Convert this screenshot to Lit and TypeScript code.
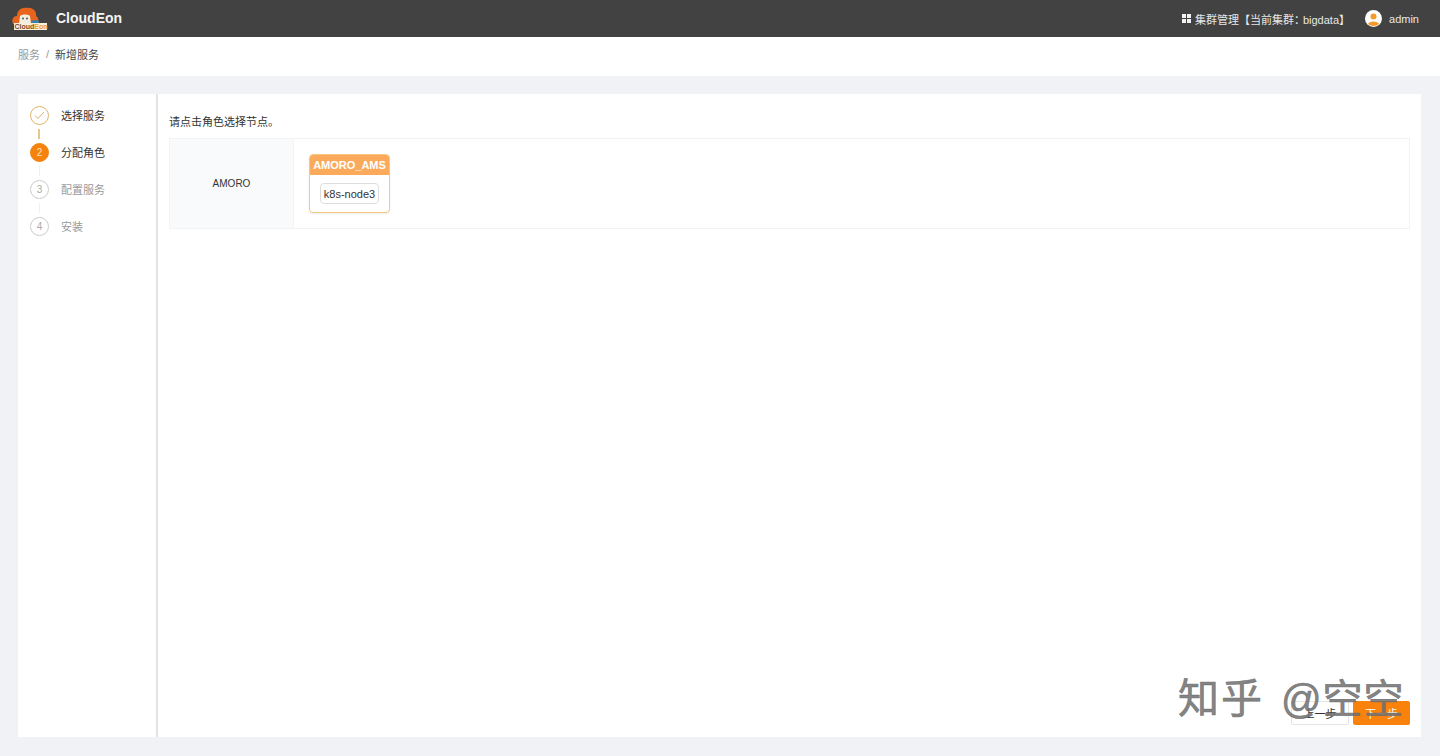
import { LitElement, html, css } from "lit";
import { customElement } from "lit/decorators.js";

@customElement("app-root")
export class AppRoot extends LitElement {
  static styles = css`
    :host { display: block; width: 1440px; height: 756px; overflow: hidden; position: relative; background: #f0f2f5;
      font-family: "Liberation Sans", "Noto Sans CJK SC", sans-serif; font-size: 11px; color: #333; }
    * { box-sizing: border-box; }
    .top { height: 37px; background: #424242; display: flex; align-items: center; padding: 0 21px 0 12px; color: #fff; }
    .logo { width: 36px; height: 24px; display: block; margin-top: 1px; }
    .brand { font-size: 14px; font-weight: 700; margin: 0 0 1px 8px; color: #f4f4f4; }
    .spacer { flex: 1; }
    .cluster { display: flex; align-items: center; gap: 4px; color: #e8e8e8; font-size: 11px; }
    .latin { margin-left: -2px; }
    .user { display: flex; align-items: center; gap: 7px; margin-left: 15px; color: #e8e8e8; }
    .crumb { height: 39px; background: #fff; display: flex; align-items: center; padding: 0 0 5px 18px; gap: 6px; }
    .crumb .muted { color: #999; }
    .crumb .cur { color: #444; }
    .main { display: flex; margin: 18px 19px 0 18px; height: 643px; }
    .steps { width: 140px; background: #fff; border-right: 2px solid #e4e4e6; padding: 11px 0 0 12px; }
    .step { display: flex; align-items: center; height: 20px; position: relative; margin-bottom: 17px; color: #999; }
    .step:last-child { margin-bottom: 0; }
    .dot { width: 19px; height: 19px; border-radius: 50%; border: 1px solid #ccc; display: flex; align-items: center; justify-content: center; font-size: 10px; color: #aaa; flex: none; margin-right: 12px; }
    .step .line { position: absolute; left: 9px; top: 24px; width: 1px; height: 10px; background: #f0f0f0; }
    .step.done .line { background: #e6c98a; width: 2px; left: 8px; }
    .step.done .dot { border-color: #dcb66c; }
    .step.done, .step.act { color: #333; }
    .step.act .dot { background: #f5820b; border-color: #f5820b; color: #ffe3c2; }
    .content { flex: 1; background: #fff; padding: 21px 11px 12px 11px; display: flex; flex-direction: column; }
    .hint { color: #333; line-height: 14px; margin-bottom: 9px; }
    .row { display: flex; height: 91px; border: 1px solid #f3f3f3; }
    .name { width: 124px; background: #f9fafb; border-right: 1px solid #f3f3f3; display: flex; align-items: center; justify-content: center; font-size: 10px; color: #333; flex: none; padding: 0 0 1px 0; }
    .cell { padding: 15px 15px; }
    .role { width: 81px; height: 59px; border: 1px solid #f5c77f; border-radius: 4px; overflow: hidden; box-shadow: 0 1px 2px rgba(0,0,0,.08); }
    .role-head { height: 20px; background: #fbaa5c; color: #fff; font-weight: 700; font-size: 11px; display: flex; align-items: center; justify-content: center; white-space: nowrap; }
    .role-body { display: flex; justify-content: center; padding-top: 8px; }
    .node { height: 21px; width: 59px; justify-content: center; border: 1px solid #ddd; border-radius: 4px; display: flex; align-items: center; font-size: 11px; color: #333; white-space: nowrap; }
    .actions { margin-top: auto; display: flex; justify-content: flex-end; gap: 4px; }
    .btn { width: 58px; height: 24px; display: flex; align-items: center; justify-content: center; border: 1px solid #e4e4e4; background: #fff; color: #333; font-size: 11px; border-radius: 2px; }
    .btn.primary { width: 57px; background: #f9820c; border-color: #f9820c; color: #fff; }
    .mark { position: absolute; left: 1178px; top: 672px; font-size: 41px; line-height: 54px; color: rgba(110, 110, 110, .85); -webkit-text-stroke: 0.7px rgba(110, 110, 110, .85); white-space: nowrap; pointer-events: none; display: flex; }
    .mark .zh { letter-spacing: 2px; margin-right: 17px; }
    .mark .at { font-size: 40px; margin-right: 1px; }
    .mark .name2 { font-size: 40px; letter-spacing: 1px; }
  `;

  render() {
    return html`
      <div class="top">
        <svg class="logo" viewBox="0 0 36 24">
          <path d="M1 17 C-1 12 2 9 5 9 C5 3 10 0 15 1 C20 0 25 4 24 9 C26 10 27 13 26 17 Z" fill="#e8641c"/>
          <path d="M8 9 C10 7 16 7 18 9 L19 17 L7 17 Z" fill="#f3ece0"/>
          <circle cx="11" cy="11.5" r="1" fill="#555"/>
          <circle cx="15" cy="11.5" r="1" fill="#555"/>
          <ellipse cx="23" cy="15" rx="4" ry="2" fill="#3d7fa8"/>
          <rect x="2" y="16" width="33" height="7" fill="#f5efdc"/>
          <text x="2.5" y="22" font-size="7" font-weight="700" font-family="Liberation Sans" fill="#7b4a2a">Cloud<tspan fill="#f09a1a">Eon</tspan></text>
        </svg>
        <span class="brand">CloudEon</span>
        <span class="spacer"></span>
        <span class="cluster">
          <svg width="9" height="9" viewBox="0 0 9 9" fill="#f2f2f2"><rect width="4" height="4"/><rect x="5" width="4" height="4"/><rect y="5" width="4" height="4"/><rect x="5" y="5" width="4" height="4"/></svg>
          <span>集群管理【当前集群：<span class="latin">bigdata</span>】</span>
        </span>
        <span class="user">
          <svg width="17" height="17" viewBox="0 0 17 17"><circle cx="8.5" cy="8.5" r="8.5" fill="#fff"/><circle cx="8.5" cy="6.5" r="3" fill="#f39a2c"/><path d="M3 14 C3.5 10.5 13.5 10.5 14 14 C11 16.5 6 16.5 3 14 Z" fill="#f39a2c"/></svg>
          admin
        </span>
      </div>
      <div class="crumb"><span class="muted">服务</span><span class="muted">/</span><span class="cur">新增服务</span></div>
      <div class="main">
        <div class="steps">
          <div class="step done"><span class="dot"><svg width="11" height="9" viewBox="0 0 11 9" fill="none" stroke="#d9b26a" stroke-width="1"><path d="M1 4.5 L4 7.5 L10 1"/></svg></span>选择服务<span class="line"></span></div>
          <div class="step act"><span class="dot">2</span>分配角色<span class="line"></span></div>
          <div class="step"><span class="dot">3</span>配置服务<span class="line"></span></div>
          <div class="step"><span class="dot">4</span>安装</div>
        </div>
        <div class="content">
          <div class="hint">请点击角色选择节点。</div>
          <div class="row">
            <div class="name">AMORO</div>
            <div class="cell">
              <div class="role">
                <div class="role-head">AMORO_AMS</div>
                <div class="role-body"><span class="node">k8s-node3</span></div>
              </div>
            </div>
          </div>
          <div class="actions"><span class="btn">上一步</span><span class="btn primary">下一步</span></div>
        </div>
      </div>
      <div class="mark"><span class="zh">知乎</span><span class="at">@</span><span class="name2">空空</span></div>
    `;
  }
}
